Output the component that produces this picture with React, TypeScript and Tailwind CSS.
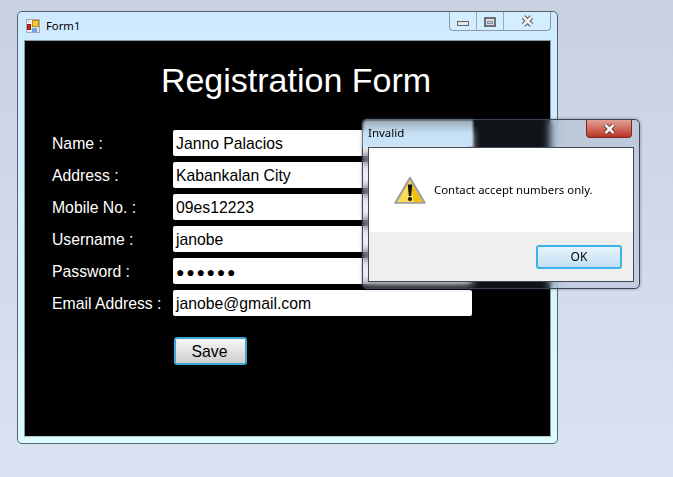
const rows: [string, string][] = [
  ["Name :", "Janno Palacios"],
  ["Address :", "Kabankalan City"],
  ["Mobile No. :", "09es12223"],
  ["Username :", "janobe"],
  ["Password :", "●●●●●●"],
  ["Email Address :", "janobe@gmail.com"],
];

function FormIcon() {
  return (
    <svg width="14" height="14" viewBox="0 0 14 14" className="shrink-0">
      <rect x="0.5" y="0.5" width="13" height="13" fill="#dfe2e6" stroke="#a9a9a9" strokeWidth="1" />
      <path d="M1 4.5 H6 M5.5 1 V5 M1 11.5 H6 M3 11 V13" stroke="#ffffff" strokeWidth="1" />
      <rect x="6.5" y="1.5" width="6" height="6" fill="#f6c93c" stroke="#b98a1c" strokeWidth="1" />
      <rect x="1.5" y="5.5" width="3" height="5" fill="#d2281c" stroke="#8c1a12" strokeWidth="1" />
      <rect x="6" y="9" width="5" height="4" fill="#6ea2e2" />
    </svg>
  );
}

function Warning() {
  return (
    <svg width="32" height="29" viewBox="0 0 32 29" className="shrink-0">
      <path d="M16 1.5 L31 27 H1 Z" fill="#b4b4b4" stroke="#9c9c9c" strokeWidth="1.5" strokeLinejoin="round" />
      <path d="M16 4.5 L28.5 26 H3.5 Z" fill="#f5bf08" />
      <path d="M16 4.5 L20 26 H3.5 Z" fill="#fbdc55" />
      <path d="M13.8 8.5 H18.2 L17.2 20 H14.8 Z" fill="#141414" />
      <circle cx="16" cy="23" r="2.1" fill="#141414" />
    </svg>
  );
}

export default function App() {
  return (
    <div className="relative h-[477px] w-[673px] overflow-hidden bg-gradient-to-b from-[#c8d1e1] to-[#dae3f1] font-['Liberation_Sans',sans-serif]">
      {/* Main window */}
      <div className="absolute left-[17px] top-[11px] flex h-[433px] w-[541px] flex-col rounded-[5px] border border-[#59636d] bg-gradient-to-b from-[#cdeaff] to-[#dcfbff] px-[6px] pb-[6px]">
        <div className="relative flex h-[28px] shrink-0 items-center gap-[6px] pl-[2px]">
          <FormIcon />
          <span className="font-['Noto_Sans',sans-serif] text-[11.3px] text-black">Form1</span>
          <div className="absolute right-0 top-0 flex h-[19px] w-[102px] rounded-b-[4px] border border-t-0 border-[#8a9ba9] bg-[#d2eeff]">
            <div className="flex w-[27px] items-center justify-center border-r border-[#9aabb8] pt-[5px]">
              <div className="h-[5px] w-[12px] border border-[#5d6670] bg-[#e8e8e8]" />
            </div>
            <div className="flex w-[27px] items-start justify-center border-r border-[#9aabb8] pt-[5px]">
              <div className="flex h-[10px] w-[12px] items-center justify-center border-2 border-[#6a7078] bg-[#dedede]">
                <div className="h-[3px] w-[6px] border border-[#8a9097] bg-[#bcd8ec]" />
              </div>
            </div>
            <div className="flex flex-1 items-center justify-center">
              <svg width="13" height="12" viewBox="0 0 13 12">
                <path d="M2.5 2 L10.5 10 M10.5 2 L2.5 10" stroke="#555b63" strokeWidth="4.8" />
                <path d="M2.5 2 L10.5 10 M10.5 2 L2.5 10" stroke="#f2f2f2" strokeWidth="2.6" />
              </svg>
            </div>
          </div>
        </div>

        <div className="flex min-h-0 flex-1 flex-col border border-[#8a9aa5] border-b-[#b7c6cc] bg-black pl-[27px] text-white">
          <h1 className="mt-[17px] h-[44px] pr-[10px] text-center text-[34px] leading-[44px]">Registration Form</h1>
          <div className="mt-[28px] flex flex-col gap-[6px]">
            {rows.map(([label, value]) => (
              <div key={label} className="flex h-[26px] items-center">
                <span className="w-[121px] pt-[2px] text-[15.75px]">{label}</span>
                <div className="flex h-[26px] w-[299px] items-center rounded-[2px] bg-white px-[3px] pt-[2px] text-[15.75px] text-black">
                  {label === "Password :" ? <span className="text-[14px] tracking-[1.75px]">{value}</span> : value}
                </div>
              </div>
            ))}
          </div>
          <button className="ml-[122px] mt-[21px] h-[28px] w-[73px] rounded-[3px] border-2 border-[#3ca6d8] bg-gradient-to-b from-[#f6f6f6] to-[#cfcfcf] pr-[2px] pt-[1px] text-[15.75px] text-black">
            Save
          </button>
        </div>
      </div>

      {/* Dialog */}
      <div className="absolute left-[362px] top-[119px] flex h-[170px] w-[278px] flex-col rounded-[5px] border border-[#3b4550] bg-[rgba(110,130,160,0.15)] px-[5px] pb-[6px] shadow-[0_0_3px_rgba(40,50,70,0.5)] backdrop-blur-[4px]">
        <div className="absolute left-0 top-0 h-[27px] w-[110px] rounded-tl-[4px] bg-gradient-to-b from-[#9dacb9] via-[#c6e1f7] to-[#c9e2f8] blur-[1px]" />
        <div className="relative flex h-[27px] shrink-0 items-center">
          <span className="relative pb-[1px] font-['Noto_Sans',sans-serif] text-[11.5px] text-black">Invalid</span>
          <div className="absolute right-[2px] top-0 flex h-[18px] w-[46px] items-center justify-center rounded-b-[4px] border border-t-0 border-[#7a2a22] bg-gradient-to-b from-[#e2a095] to-[#b93022]">
            <svg width="13" height="12" viewBox="0 0 13 12">
              <path d="M2.5 2 L10.5 10 M10.5 2 L2.5 10" stroke="#5b2a26" strokeWidth="4.4" />
              <path d="M2.5 2 L10.5 10 M10.5 2 L2.5 10" stroke="#f4f4f4" strokeWidth="2.6" />
            </svg>
          </div>
        </div>
        <div className="relative flex min-h-0 flex-1 flex-col border border-[#3f4a55] bg-white">
          <div className="flex h-[84px] shrink-0 items-start pl-[25px] pt-[28px]">
            <Warning />
            <span className="ml-[8px] mt-[5px] font-['Noto_Sans',sans-serif] text-[11.4px] text-black">Contact accept numbers only.</span>
          </div>
          <div className="flex flex-1 items-center justify-end bg-[#efefef] pr-[11px]">
            <button className="h-[24px] w-[86px] rounded-[3px] border-2 border-[#3db4e8] bg-gradient-to-b from-[#e6f3fb] to-[#c2e0f2] font-['Noto_Sans',sans-serif] text-[12px] text-black">
              OK
            </button>
          </div>
        </div>
      </div>
    </div>
  );
}
